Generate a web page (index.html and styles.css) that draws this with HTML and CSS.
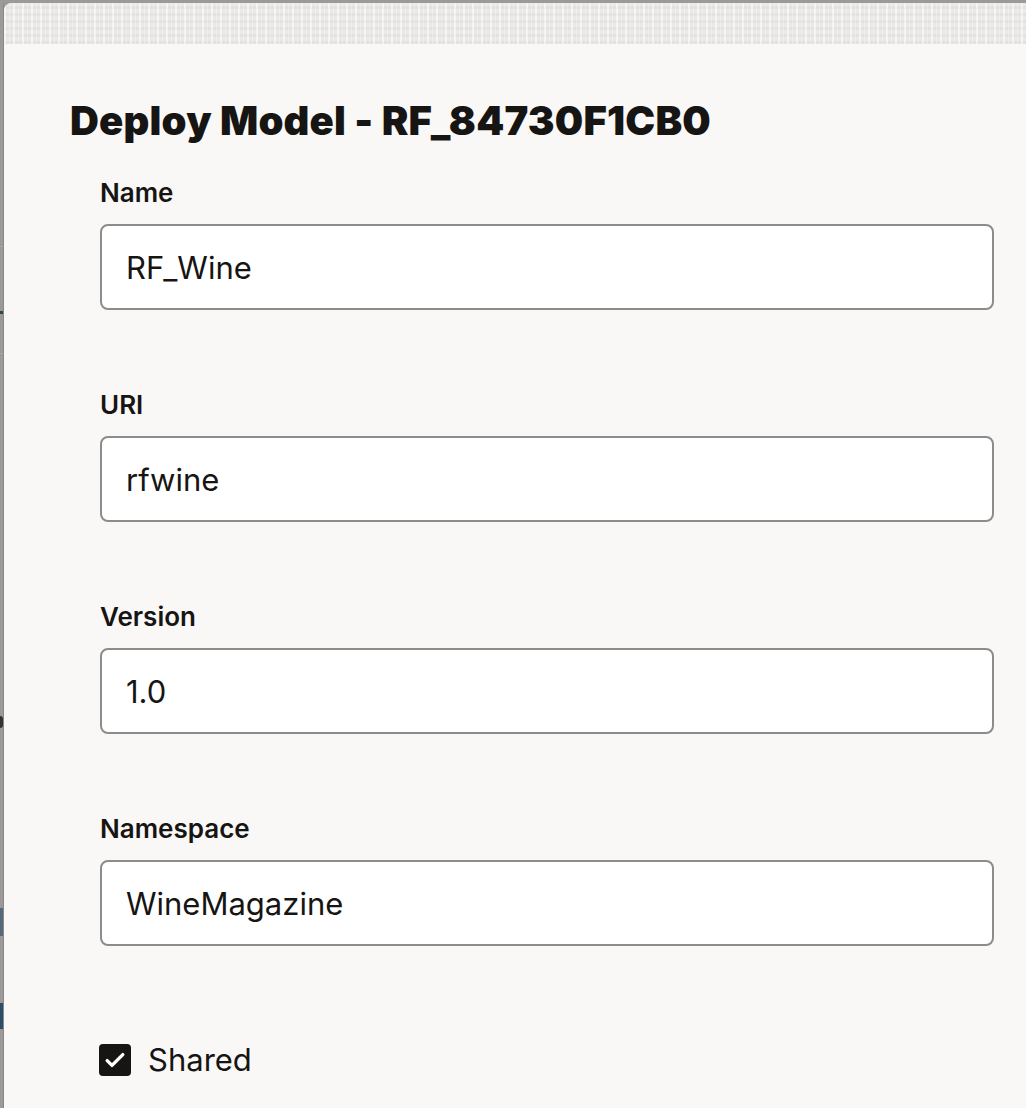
FILE: index.html
```html
<!DOCTYPE html>
<html lang="en">
<head>
    <meta charset="UTF-8">
    <meta name="viewport" content="width=device-width, initial-scale=1.0">
    <title>Deploy Model</title>
    <link rel="stylesheet" href="styles.css">
</head>
<body>
    <div class="backdrop">
        <div class="backdrop-page">
            <span class="page-line line-1"></span>
            <span class="page-line line-2"></span>
            <span class="page-line line-3"></span>
            <span class="page-mark"></span>
            <span class="page-line line-4"></span>
            <span class="page-line line-5"></span>
        </div>
        <div class="dialog">
            <div class="dialog-header"></div>
            <div class="dialog-body">
                <h1>Deploy Model - RF_84730F1CB0</h1>
                <form class="form">
                    <div class="field">
                        <label for="name">Name</label>
                        <input id="name" type="text" value="RF_Wine">
                    </div>
                    <div class="field">
                        <label for="uri">URI</label>
                        <input id="uri" type="text" value="rfwine">
                    </div>
                    <div class="field">
                        <label for="version">Version</label>
                        <input id="version" type="text" value="1.0">
                    </div>
                    <div class="field">
                        <label for="namespace">Namespace</label>
                        <input id="namespace" type="text" value="WineMagazine">
                    </div>
                    <label class="checkbox">
                        <span class="checkbox-box">
                            <svg viewBox="0 0 20 20" width="24" height="24">
                                <path d="M3.5 10.5l4 4L16.5 5.5" fill="none" stroke="#fff" stroke-width="2.8" stroke-linecap="round" stroke-linejoin="round"/>
                            </svg>
                        </span>
                        <span class="checkbox-label">Shared</span>
                    </label>
                </form>
            </div>
        </div>
    </div>
</body>
</html>
```

FILE: styles.css
```css
body {
    margin: 0;
    font-family: Inter, "Noto Sans", sans-serif;
    background-color: #9b9a99;
    color: #161513;
    overflow: hidden;
}
.backdrop {
    display: flex;
    height: 1108px;
    padding-top: 3px;
    box-sizing: border-box;
}
.backdrop-page {
    position: relative;
    width: 4px;
    flex-shrink: 0;
    border-right: 1px solid #8a8988;
    box-sizing: border-box;
}
.page-line {
    position: absolute;
    left: 0;
    width: 3px;
    height: 1px;
    background-color: #a9a8a7;
}
.line-1 { top: 243px; }
.line-2 { top: 308px; height: 3px; background-color: #2d4650; }
.line-3 { top: 350px; }
.page-mark {
    position: absolute;
    top: 713px;
    left: 0;
    width: 3px;
    height: 12px;
    border-radius: 0 3px 3px 0;
    background-color: #333;
}
.line-4 { top: 905px; height: 28px; background-color: #55677a; }
.line-5 { top: 1000px; height: 26px; background-color: #2e4d6b; }
.dialog {
    flex: 1;
    background-color: #f9f8f6;
    border-top-left-radius: 8px;
    overflow: hidden;
}
.dialog-header {
    height: 41px;
    background-color: #ebe9e7;
    background-image:
        repeating-linear-gradient(90deg, rgba(255,255,255,0.55) 0 2px, transparent 2px 5px, rgba(255,255,255,0.3) 5px 6px, transparent 6px 9px),
        repeating-linear-gradient(0deg, rgba(220,218,216,0.5) 0 3px, transparent 3px 7px);
}
.dialog-body {
    padding: 54px 32px 0 66px;
}
h1 {
    margin: 0;
    font-size: 40px;
    line-height: 46px;
    font-weight: 900;
    letter-spacing: 0.2px;
}
.form {
    display: flex;
    flex-direction: column;
    margin-top: 34px;
    padding-left: 30px;
}
.field {
    display: flex;
    flex-direction: column;
    gap: 16px;
    margin-bottom: 80px;
}
.field label {
    font-size: 26px;
    line-height: 30px;
    font-weight: 600;
}
.field input {
    height: 86px;
    box-sizing: border-box;
    border: 2px solid #8d8c8b;
    border-radius: 8px;
    background-color: #fff;
    padding: 0 24px;
    font-family: inherit;
    font-size: 31px;
    color: #161513;
    outline: none;
}
.checkbox {
    display: flex;
    align-items: center;
    gap: 17px;
    margin-top: 15px;
    margin-left: -1px;
}
.checkbox-box {
    display: flex;
    align-items: center;
    justify-content: center;
    width: 32px;
    height: 32px;
    border-radius: 4px;
    background-color: #161513;
}
.checkbox-label {
    font-size: 31px;
}
```
